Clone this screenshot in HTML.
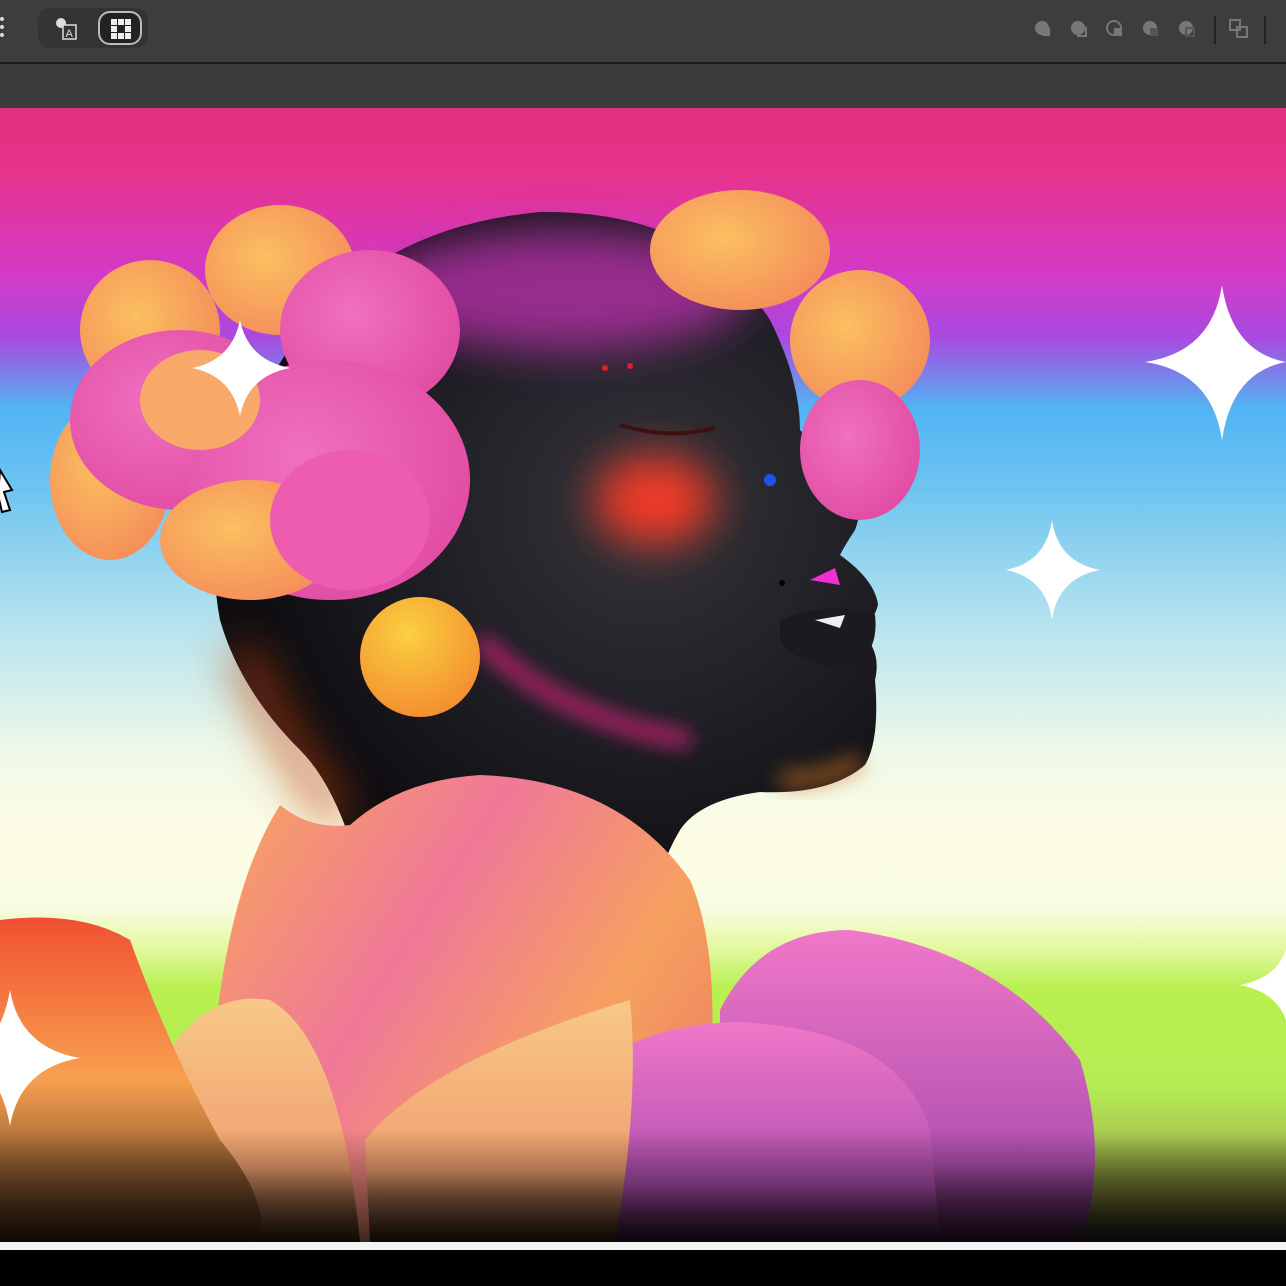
<!DOCTYPE html>
<html><head><meta charset="utf-8">
<style>
html,body{margin:0;padding:0;width:1286px;height:1286px;overflow:hidden;background:#000;font-family:"Liberation Sans",sans-serif}
#top{position:absolute;left:0;top:0;width:1286px;height:62px;background:#3d3d3d}
#line{position:absolute;left:0;top:62px;width:1286px;height:2px;background:#1e1e1e}
#bar2{position:absolute;left:0;top:64px;width:1286px;height:44px;background:#3b3b3b}
#img{position:absolute;left:0;top:108px;width:1286px;height:1134px;overflow:hidden;
background:linear-gradient(180deg,#e22f7e 0px,#e8338a 60px,#d23ac8 170px,#a84ae0 230px,#52b4f4 300px,#6ec4f0 380px,#b8e4ee 520px,#eef8e8 640px,#fdfde6 730px,#f8fce0 800px,#e4f8a0 840px,#b8f050 880px,#b4ec54 980px,#a8c850 1030px,#6a6a30 1090px,#1a1a1a 1134px)}
#white{position:absolute;left:0;top:1242px;width:1286px;height:8px;background:#f4f4f4}
</style></head><body>
<div id="top">
  <div style="position:absolute;left:0;top:17px;width:5px;height:22px">
    <div style="width:4px;height:4px;border-radius:2px;background:#ddd;margin-bottom:4px"></div>
    <div style="width:4px;height:4px;border-radius:2px;background:#ddd;margin-bottom:4px"></div>
    <div style="width:4px;height:4px;border-radius:2px;background:#ddd"></div>
  </div>
  <div style="position:absolute;left:38px;top:8px;width:110px;height:40px;border-radius:12px;background:#333"></div>
  <svg style="position:absolute;left:54px;top:16px" width="26" height="26" viewBox="0 0 26 26">
    <circle cx="7" cy="7" r="5" fill="#ddd"/><rect x="9" y="9" width="13" height="14" fill="#333" stroke="#ddd" stroke-width="1.5"/>
    <text x="11.5" y="21" font-size="11" fill="#ddd" font-family="Liberation Sans">A</text></svg>
  <div style="position:absolute;left:98px;top:11px;width:44px;height:34px;border-radius:12px;border:2px solid #bbb;box-sizing:border-box;background:#222"></div>
  <svg style="position:absolute;left:110px;top:18px" width="22" height="22" viewBox="0 0 22 22" fill="#eee">
    <rect x="1" y="1" width="6" height="6"/><rect x="8" y="1" width="6" height="6"/><rect x="15" y="1" width="6" height="6"/>
    <rect x="1" y="8" width="6" height="6"/><rect x="15" y="8" width="6" height="6"/>
    <rect x="1" y="15" width="6" height="6"/><rect x="8" y="15" width="6" height="6"/><rect x="15" y="15" width="6" height="6"/></svg>
  <svg style="position:absolute;left:1030px;top:16px" width="256" height="28" viewBox="0 0 256 28" fill="#777">
    <circle cx="12" cy="12" r="7"/><rect x="12" y="12" width="8" height="8"/>
    <circle cx="48" cy="12" r="7"/><rect x="48" y="12" width="8" height="8" fill="none" stroke="#777" stroke-width="2"/>
    <circle cx="84" cy="12" r="7" fill="none" stroke="#777" stroke-width="2"/><rect x="84" y="12" width="8" height="8"/>
    <circle cx="120" cy="12" r="7"/><rect x="120" y="12" width="8" height="8" fill="#555"/>
    <circle cx="156" cy="12" r="7"/><rect x="156" y="12" width="8" height="8" fill="none" stroke="#555" stroke-width="2"/>
    <rect x="184" y="0" width="2" height="28" fill="#222"/>
    <rect x="200" y="4" width="10" height="10" fill="none" stroke="#777" stroke-width="2"/><rect x="207" y="11" width="10" height="10" fill="none" stroke="#777" stroke-width="2"/>
    <rect x="234" y="0" width="2" height="28" fill="#222"/></svg>
</div>
<div id="line"></div>
<div id="bar2"></div>
<div id="img">
<svg width="1286" height="1134" viewBox="0 108 1286 1134">
<defs>
<filter id="b10" x="-100%" y="-100%" width="300%" height="300%"><feGaussianBlur stdDeviation="10"/></filter>
<filter id="b20" x="-100%" y="-100%" width="300%" height="300%"><feGaussianBlur stdDeviation="22"/></filter>
<radialGradient id="skin" cx="0.65" cy="0.45" r="0.6"><stop offset="0" stop-color="#34343c"/><stop offset="1" stop-color="#0e0e12"/></radialGradient>
<radialGradient id="pk" cx="0.4" cy="0.4" r="0.7"><stop offset="0" stop-color="#f070c0"/><stop offset="1" stop-color="#e04aa0"/></radialGradient>
<radialGradient id="or" cx="0.4" cy="0.4" r="0.7"><stop offset="0" stop-color="#fbc060"/><stop offset="1" stop-color="#f48a5a"/></radialGradient>
<radialGradient id="ball" cx="0.4" cy="0.3" r="0.7"><stop offset="0" stop-color="#fad040"/><stop offset="1" stop-color="#f49030"/></radialGradient>
<linearGradient id="body" x1="0" y1="0" x2="1" y2="0.6"><stop offset="0" stop-color="#f8a858"/><stop offset="0.45" stop-color="#f07898"/><stop offset="0.8" stop-color="#f6a060"/><stop offset="1" stop-color="#f08860"/></linearGradient>
<linearGradient id="pet2" x1="0" y1="0" x2="0" y2="1"><stop offset="0" stop-color="#f078c8"/><stop offset="0.75" stop-color="#b050b0"/><stop offset="1" stop-color="#301830"/></linearGradient>
<linearGradient id="pet3" x1="0" y1="0" x2="0" y2="1"><stop offset="0" stop-color="#f05030"/><stop offset="0.5" stop-color="#f8a050"/><stop offset="1" stop-color="#402818"/></linearGradient>
<linearGradient id="pet4" x1="0" y1="0" x2="0" y2="1"><stop offset="0" stop-color="#f8c888"/><stop offset="0.7" stop-color="#f0a070"/><stop offset="1" stop-color="#3a2418"/></linearGradient>
<linearGradient id="shade" x1="0" y1="0" x2="0" y2="1"><stop offset="0" stop-color="#000" stop-opacity="0"/><stop offset="1" stop-color="#000" stop-opacity="0.75"/></linearGradient>
</defs>
<!-- head + neck -->
<path d="M350 840 Q330 780 300 750 Q240 690 220 620 Q200 520 260 400 Q340 230 540 212 Q700 210 770 320 Q800 380 800 430 Q830 460 850 480 Q865 505 855 530 Q845 545 840 555 Q875 580 878 605 Q872 625 860 632 Q882 650 875 680 Q880 740 865 765 Q830 795 760 792 Q700 800 680 830 Q668 850 662 870 Z" fill="url(#skin)"/>
<path d="M240 650 Q280 740 340 820" stroke="#c04010" stroke-width="30" fill="none" filter="url(#b20)" opacity="0.7"/>
<path d="M780 780 Q830 780 860 760" stroke="#c87020" stroke-width="16" fill="none" filter="url(#b10)" opacity="0.7"/>
<ellipse cx="560" cy="290" rx="190" ry="60" fill="#c030b0" filter="url(#b20)" opacity="0.75"/>
<ellipse cx="655" cy="500" rx="60" ry="45" fill="#f03a28" filter="url(#b20)"/>
<path d="M480 640 Q560 720 690 740" stroke="#c02070" stroke-width="16" fill="none" filter="url(#b10)"/>
<path d="M780 620 Q830 600 875 615 Q880 660 840 670 Q790 660 780 640Z" fill="#1a1a20"/>
<path d="M810 580 L835 568 L840 585 Z" fill="#f030d0"/>
<path d="M815 620 L845 615 L840 628 Z" fill="#eee"/>
<circle cx="605" cy="368" r="3" fill="#e02020"/><circle cx="630" cy="366" r="3" fill="#e02020"/>
<circle cx="770" cy="480" r="6" fill="#2050f0"/>
<circle cx="782" cy="583" r="3" fill="#000"/>
<path d="M620 425 Q670 440 715 428" stroke="#401010" stroke-width="4" fill="none"/>
<!-- earring -->
<circle cx="420" cy="657" r="60" fill="url(#ball)"/>
<!-- left flower -->
<g>
<ellipse cx="150" cy="330" rx="70" ry="70" fill="url(#or)"/>
<ellipse cx="280" cy="270" rx="75" ry="65" fill="url(#or)"/>
<ellipse cx="110" cy="480" rx="60" ry="80" fill="url(#or)"/>
<ellipse cx="370" cy="330" rx="90" ry="80" fill="url(#pk)"/>
<ellipse cx="180" cy="420" rx="110" ry="90" fill="url(#pk)"/>
<ellipse cx="330" cy="480" rx="140" ry="120" fill="url(#pk)"/>
<ellipse cx="250" cy="540" rx="90" ry="60" fill="url(#or)"/>
<ellipse cx="350" cy="520" rx="80" ry="70" fill="#ee5cb0"/>
<ellipse cx="200" cy="400" rx="60" ry="50" fill="#f8a868"/>
</g>
<!-- right flower -->
<g>
<ellipse cx="740" cy="250" rx="90" ry="60" fill="url(#or)"/>
<ellipse cx="860" cy="340" rx="70" ry="70" fill="url(#or)"/>
<ellipse cx="860" cy="450" rx="60" ry="70" fill="url(#pk)"/>
</g>
<!-- body petals -->
<path d="M210 1100 Q220 900 280 805 Q310 830 350 825 Q400 780 480 775 Q620 780 690 880 Q720 950 710 1080 L700 1242 L220 1242 Z" fill="url(#body)"/>
<path d="M720 1010 Q760 930 850 930 Q1000 950 1080 1060 Q1110 1160 1080 1242 L720 1242Z" fill="url(#pet2)"/>
<path d="M555 1130 Q590 1025 740 1022 Q900 1030 930 1130 L940 1242 L560 1242Z" fill="url(#pet2)"/>
<path d="M365 1140 Q430 1060 630 1000 Q640 1100 615 1242 L370 1242Z" fill="url(#pet4)"/>
<path d="M170 1050 Q210 990 270 1000 Q340 1040 360 1242 L170 1242Z" fill="url(#pet4)"/>
<path d="M0 920 Q80 910 130 940 Q170 1050 220 1140 Q270 1200 260 1242 L0 1242Z" fill="url(#pet3)"/>
<rect x="0" y="1130" width="1286" height="112" fill="url(#shade)"/>
<!-- sparkles -->
<g fill="#fff">
<path d="M240 320 Q248 360 290 368 Q248 376 240 416 Q232 376 192 368 Q232 360 240 320Z"/>
<path d="M1222 285 Q1232 352 1286 362 Q1232 372 1222 440 Q1212 372 1145 362 Q1212 352 1222 285Z"/>
<path d="M1052 520 Q1058 562 1100 570 Q1058 578 1052 620 Q1046 578 1006 570 Q1046 562 1052 520Z"/>
<path d="M10 990 Q20 1048 80 1058 Q20 1068 10 1126 Q0 1068 -40 1058 Q0 1048 10 990Z"/>
<path d="M1286 950 Q1276 978 1240 985 Q1276 992 1286 1020Z"/>
</g>
<path d="M0 470 L12 490 L4 492 L10 510 L2 512 L-2 495Z" fill="#fff" stroke="#000" stroke-width="2"/>
</svg>
</div>
<div id="white"></div>
</body></html>
